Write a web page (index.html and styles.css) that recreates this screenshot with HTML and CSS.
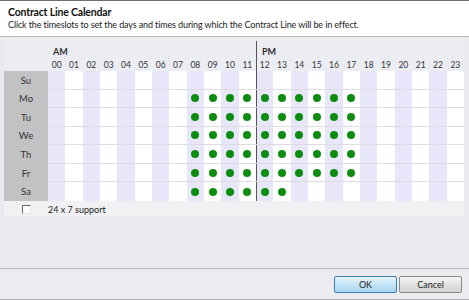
FILE: index.html
```html
<!DOCTYPE html>
<html>
<head>
<meta charset="utf-8">
<link rel="stylesheet" href="styles.css">
</head>
<body>
<div class="dialog">
  <div class="head">
    <div class="title">Contract Line Calendar</div>
    <div class="sub">Click the timeslots to set the days and times during which the Contract Line will be in effect.</div>
  </div>
  <div class="content">
    <div class="panel">
      <div class="ampm">
        <div class="spacer"></div>
        <div class="am">AM</div>
        <div class="pm">PM</div>
      </div>
      <div class="hours" id="hours"></div>
      <div class="grid" id="grid"></div>
      <div class="check-row">
        <span class="checkbox"></span>
        <span class="check-label">24 x 7 support</span>
      </div>
    </div>
  </div>
  <div class="footer">
    <button class="btn btn-ok">OK</button>
    <button class="btn">Cancel</button>
  </div>
</div>
<script src="app.js"></script>
</body>
</html>
```
FILE: app.js
```js
(function () {
  var hours = document.getElementById('hours');
  var h = '<div class="spacer"></div>';
  for (var i = 0; i < 24; i++) {
    var s = (i < 10 ? '0' : '') + i;
    h += '<div class="hour' + (i === 12 ? ' noon' : '') + '">' + s + '</div>';
  }
  hours.innerHTML = h;

  var days = ['Su', 'Mo', 'Tu', 'We', 'Th', 'Fr', 'Sa'];
  var grid = document.getElementById('grid');
  var g = '';
  for (var d = 0; d < 7; d++) {
    var last = d === 6 ? ' last' : '';
    g += '<div class="day' + last + '">' + days[d] + '</div>';
    for (var c = 0; c < 24; c++) {
      var on = false;
      if (d >= 1 && d <= 5 && c >= 8 && c <= 17) on = true;
      if (d === 6 && c >= 8 && c <= 13) on = true;
      var cls = 'cell' + (c % 2 === 0 ? ' even' : '') + (c === 12 ? ' noon' : '') + last;
      g += '<div class="' + cls + '">' + (on ? '<span class="dot"></span>' : '') + '</div>';
    }
  }
  grid.innerHTML = g;
})();
```
FILE: styles.css
```css
html, body {
  margin: 0;
  padding: 0;
  background: #ffffff;
}
body {
  font-family: Lato, "Open Sans", sans-serif;
  color: #222;
}
.dialog {
  width: 469px;
  height: 300px;
  display: flex;
  flex-direction: column;
  border-top: 1px solid #6e6e6e;
  box-sizing: border-box;
  background: #e9e9ef;
}
.head {
  height: 36px;
  background: #ffffff;
  border-bottom: 1px solid #b9b9bd;
  padding: 5px 0 0 8px;
  box-sizing: border-box;
}
.title {
  font-weight: 700;
  font-size: 10.5px;
  line-height: 12px;
  letter-spacing: -0.18px;
  color: #111;
}
.sub {
  font-size: 9px;
  line-height: 12px;
  margin-top: 1px;
  letter-spacing: -0.12px;
  color: #222;
}
.content {
  flex: 1;
  background: #e9e9ef;
}
.panel {
  margin-left: 4px;
  width: 460px;
  height: 179px;
  background: #f1f1f4;
  display: flex;
  flex-direction: column;
}
.ampm, .hours {
  display: grid;
  grid-template-columns: 44px repeat(24, 1fr);
  background: #ececf3;
}
.ampm {
  height: 22px;
  align-items: end;
}
.am {
  grid-column: 2 / span 12;
  font-weight: 700;
  font-size: 9px;
  color: #333;
  padding-left: 5px;
  line-height: 14px;
}
.pm {
  grid-column: 14 / span 12;
  font-weight: 700;
  font-size: 9px;
  color: #333;
  padding-left: 6px;
  line-height: 14px;
  align-self: stretch;
  box-shadow: inset 1px 0 0 #555;
  margin-top: 4px;
  display: flex;
  align-items: flex-end;
}
.hours {
  height: 12px;
}
.hour {
  font-size: 8.5px;
  color: #333;
  text-align: center;
  line-height: 12px;
}
.hour.noon {
  box-shadow: inset 1px 0 0 #555;
}
.grid {
  display: grid;
  grid-template-columns: 44px repeat(24, 1fr);
  grid-template-rows: repeat(7, 1fr);
  height: 130px;
}
.day {
  background: #c2c2c4;
  color: #333;
  font-size: 9.5px;
  display: flex;
  align-items: center;
  justify-content: center;
}
.cell {
  background: #ffffff;
  border-bottom: 1px solid #dcdce2;
  box-sizing: border-box;
  display: flex;
  align-items: center;
  justify-content: center;
}
.cell.even {
  background: #e7e7f9;
}
.cell.last {
  border-bottom: none;
}
.cell.noon {
  box-shadow: inset 1px 0 0 #555;
}
.dot {
  width: 8px;
  height: 8px;
  border-radius: 50%;
  background: #0e8c12;
}
.check-row {
  height: 15px;
  padding-top: 2px;
  box-sizing: border-box;
  display: flex;
  align-items: center;
  font-size: 9px;
  color: #222;
}
.checkbox {
  width: 9px;
  height: 9px;
  margin-left: 18px;
  box-sizing: border-box;
  border-top: 1px solid #6a6a6a;
  border-left: 1px solid #6a6a6a;
  border-right: 1px solid #e6e6e6;
  border-bottom: 1px solid #e6e6e6;
  background: #ffffff;
}
.check-label {
  margin-left: 17px;
}
.footer {
  height: 32px;
  border-top: 1px solid #b9b9bd;
  border-bottom: 1px solid #b0b0b4;
  background: #ececf0;
  display: flex;
  justify-content: flex-end;
  align-items: flex-start;
  gap: 2px;
  padding: 7px 7px 0 0;
  box-sizing: border-box;
}
.btn {
  width: 63px;
  height: 17px;
  margin: 0;
  padding: 0;
  font-family: Lato, "Open Sans", sans-serif;
  font-size: 9px;
  color: #222;
  border: 1px solid #8a8a8a;
  border-radius: 2px;
  background: linear-gradient(#f6f6f6, #e2e2e2 50%, #d6d6d6);
}
.btn-ok {
  border-color: #3c7fb1;
  background: linear-gradient(#e6f4fc, #c4e4f7 50%, #a9d6f1);
}
```
